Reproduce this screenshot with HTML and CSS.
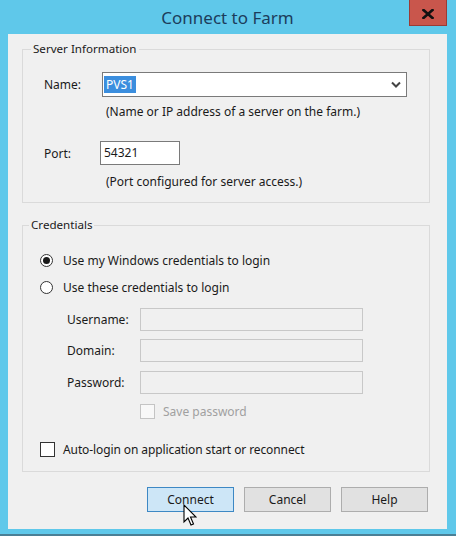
FILE: index.html
```html
<!DOCTYPE html>
<html>
<head>
<meta charset="utf-8">
<link rel="stylesheet" href="styles.css">
</head>
<body>
<div class="window">
  <div class="titlebar">
    <span class="spacer"></span>
    <span class="title">Connect to Farm</span>
    <span class="close">
      <svg width="12" height="10" viewBox="0 0 12 10"><path d="M1.5 1 L10.5 9 M10.5 1 L1.5 9" stroke="#111" stroke-width="2.6" stroke-linecap="square"/></svg>
    </span>
  </div>
  <div class="client">
    <fieldset class="group g1">
      <legend>Server Information</legend>
      <div class="row name-row">
        <label class="lbl lbl-name">Name:</label>
        <div class="combo">
          <span class="sel">PVS1</span>
          <svg class="chev" width="10" height="7" viewBox="0 0 10 7"><path d="M1 1.5 L5 5.5 L9 1.5" fill="none" stroke="#444" stroke-width="2"/></svg>
        </div>
      </div>
      <div class="hint hint1">(Name or IP address of a server on the farm.)</div>
      <div class="row port-row">
        <label class="lbl lbl-port">Port:</label>
        <div class="port">54321</div>
      </div>
      <div class="hint hint2">(Port configured for server access.)</div>
    </fieldset>

    <fieldset class="group g2">
      <legend>Credentials</legend>
      <div class="opt opt1"><span class="radio checked"></span><span>Use my Windows credentials to login</span></div>
      <div class="opt opt2"><span class="radio"></span><span>Use these credentials to login</span></div>
      <div class="cred r-user"><label class="clbl">Username:</label><div class="dinput"></div></div>
      <div class="cred r-dom"><label class="clbl">Domain:</label><div class="dinput"></div></div>
      <div class="cred r-pass"><label class="clbl">Password:</label><div class="dinput"></div></div>
      <div class="save"><span class="check disabled"></span><span class="dis-text">Save password</span></div>
      <div class="opt auto"><span class="check"></span><span class="auto-text">Auto-login on application start or reconnect</span></div>
    </fieldset>

    <div class="buttons">
      <div class="btn default">Connect
        <svg class="cursor" width="14" height="23" viewBox="0 0 14 23"><path d="M1 1 L1 18 L5 14 L8 21 L10.5 20 L7.5 13 L13 13 Z" fill="#fff" stroke="#000" stroke-width="1.1" stroke-linejoin="miter"/></svg>
      </div>
      <div class="btn">Cancel</div>
      <div class="btn">Help</div>
    </div>
  </div>
</div>
</body>
</html>
```

FILE: styles.css
```css
* { box-sizing: border-box; }
html, body { margin: 0; padding: 0; }
body {
  font-family: "Noto Sans", "Open Sans", "Liberation Sans", sans-serif;
  font-size: 12px;
  color: #1a1a1a;
  background: #5ec8ea;
}
.window {
  width: 456px;
  height: 536px;
  background: #5fc8ea;
  padding: 0 9px 0 8px;
  border-bottom: 2px solid #4a7f95;
  display: flex;
  flex-direction: column;
}
.titlebar {
  height: 34px;
  display: grid;
  grid-template-columns: 38px 1fr 38px;
  align-items: start;
}
.title {
  text-align: center;
  font-size: 17px;
  color: #1c3d5c;
  line-height: 20px;
  padding-top: 8px;
}
.close {
  width: 38px;
  height: 26px;
  background: #c9564c;
  border: 1px solid #9b3b35;
  border-top: none;
  display: flex;
  align-items: center;
  justify-content: center;
  padding-top: 2px;
}
.client {
  background: #f0f0f0;
  height: 495px;
  padding-top: 7px;
  position: relative;
}
.group {
  border: 1px solid #dadada;
  margin: 0 17px 0 14px;
  padding: 0;
  min-width: 0;
}
.group legend {
  margin-left: 8px;
  padding: 0 2px;
  line-height: 16px;
  font-size: 11.6px;
}
.g1 { height: 162px; }
.g2 { margin-top: 14px; height: 255px; }
.g2 legend { margin-left: 6px; }

.row { display: flex; align-items: center; }
.lbl { display: block; }
.name-row { margin-top: 15px; padding-left: 21px; }
.lbl-name { width: 58px; }
.combo {
  width: 305px;
  height: 25px;
  border: 1px solid #7a7a7a;
  background: #fff;
  display: flex;
  align-items: center;
  padding-left: 1px;
  padding-right: 5px;
}
.sel {
  background: #3b8ede;
  color: #fff;
  line-height: 17px;
  padding: 0 2px;
}
.chev { margin-left: auto; }
.hint { padding-left: 83px; line-height: 16px; }
.hint1 { margin-top: 7px; }
.port-row { margin-top: 21px; padding-left: 21px; }
.lbl-port { width: 56px; }
.port {
  width: 80px;
  height: 24px;
  border: 1px solid #7a7a7a;
  background: #fff;
  line-height: 22px;
  padding-left: 3px;
}
.hint2 { margin-top: 9px; }

.opt { display: flex; align-items: center; height: 18px; padding-left: 17px; gap: 10px; }
.opt1 { margin-top: 18px; }
.opt2 { margin-top: 9px; }
.radio {
  width: 13px; height: 13px;
  border-radius: 50%;
  border: 1px solid #333;
  background: #fff;
  position: relative;
  display: flex; align-items: center; justify-content: center;
}
.radio.checked::after {
  content: "";
  width: 7px; height: 7px; border-radius: 50%;
  background: #1a1a1a;
}
.cred { display: flex; align-items: center; height: 23px; padding-left: 44px; }
.r-user { margin-top: 12px; }
.r-dom { margin-top: 8px; }
.r-pass { margin-top: 9px; }
.clbl { width: 73px; }
.dinput {
  width: 223px; height: 23px;
  border: 1px solid #c8c8c8;
  background: #f0f0f0;
}
.save { display: flex; align-items: center; height: 16px; margin-top: 9px; padding-left: 117px; gap: 8px; }
.check {
  width: 15px; height: 15px;
  border: 1px solid #333;
  background: #fff;
}
.check.disabled { border-color: #c4c4c4; background: #f8f8f8; }
.dis-text { color: #a0a0a0; }
.auto { margin-top: 22px; height: 16px; gap: 8px; }
.auto-text { letter-spacing: -0.1px; }

.buttons {
  display: flex;
  justify-content: flex-end;
  gap: 10px;
  margin-top: 15px;
  margin-right: 19px;
}
.btn {
  width: 87px;
  height: 25px;
  border: 1px solid #adadad;
  background: #e1e1e1;
  display: flex;
  align-items: center;
  justify-content: center;
  position: relative;
}
.btn.default { background: #cde6f7; border-color: #3d88c4; }
.cursor { position: absolute; left: 35px; top: 16px; }
```
